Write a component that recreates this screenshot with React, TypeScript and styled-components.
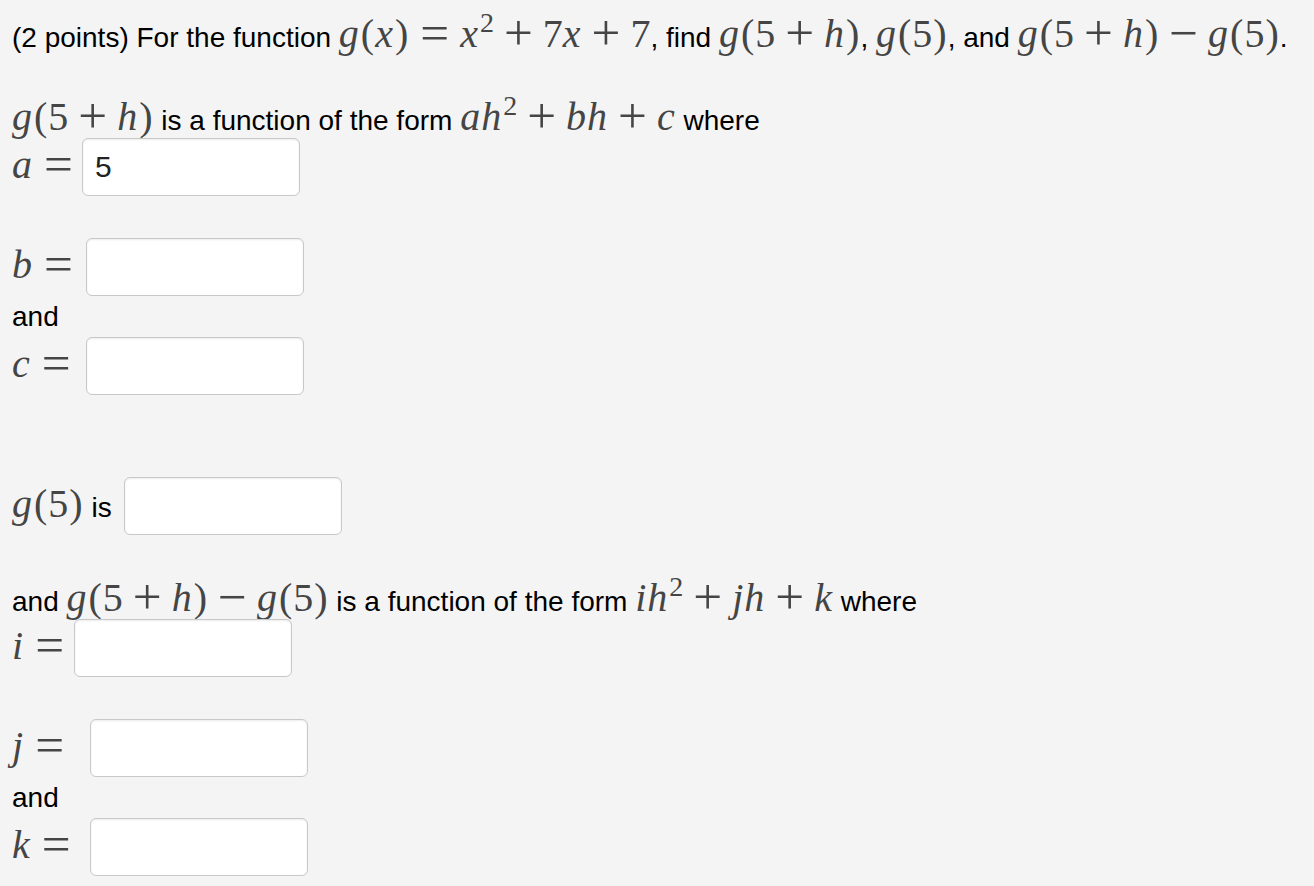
import React from "react";
import styled, { createGlobalStyle } from "styled-components";

const GlobalStyle = createGlobalStyle`
  html, body {
    margin: 0;
    background: #f4f4f4;
  }
`;

const Page = styled.div`
  padding: 14px 12px 8px 12px;
  font-family: "Liberation Sans", Arial, sans-serif;
  font-size: 28px;
  color: #000;
`;

const TextLine = styled.div`
  height: 41px;
  line-height: 41px;
  white-space: nowrap;
`;

const Blank = styled.div<{ h?: number }>`
  height: ${(p) => p.h ?? 41}px;
`;

const Row = styled.div`
  display: flex;
  align-items: center;
  height: 58px;
  white-space: nowrap;
`;

// fixed width of the label before an answer box, so the boxes line up as in the page
const Label = styled.span<{ w: number }>`
  display: inline-block;
  width: ${(p) => p.w}px;
  flex: none;
  line-height: 41px;
`;

const Math = styled.span`
  font-family: "Liberation Serif", "Times New Roman", serif;
  font-size: 40px;
  line-height: 1;
  color: #454545;
  white-space: nowrap;
`;

const V = styled.i`
  font-style: italic;
  padding-right: 1px;
`;

const P = styled.span`
  padding: 0 1px;
`;

const Op = styled.span<{ rel?: boolean }>`
  font-size: 1.28em;
  line-height: 0;
  vertical-align: -0.06em;
  padding: 0 ${(p) => (p.rel ? 11 : 10)}px;
`;

const Sup = styled.sup`
  font-size: 28px;
  vertical-align: 15px;
  line-height: 0;
  padding-left: 1px;
`;

const Answer = styled.input`
  box-sizing: border-box;
  width: 218px;
  height: 58px;
  padding: 0 12px;
  background: #fff;
  border: 1px solid #c8c8c8;
  border-radius: 6px;
  box-shadow: inset 0 1px 2px rgba(0, 0, 0, 0.08);
  font-family: "Liberation Sans", Arial, sans-serif;
  font-size: 30px;
  color: #222;
  outline: none;
`;

const G = ({ arg }: { arg: React.ReactNode }) => (
  <>
    <V>g</V>
    <P>(</P>
    {arg}
    <P>)</P>
  </>
);

const FivePlusH = () => (
  <>
    5<Op>+</Op>
    <V>h</V>
  </>
);

const Diff = () => (
  <Math>
    <G arg={<FivePlusH />} />
    <Op>−</Op>
    <G arg="5" />
  </Math>
);

const Eq = ({ name }: { name: string }) => (
  <Math>
    <V>{name}</V>
    <Op rel>=</Op>
  </Math>
);

export default function App() {
  return (
    <>
      <GlobalStyle />
      <Page>
        <TextLine>
          (2 points) For the function{" "}
          <Math>
            <G arg={<V>x</V>} />
            <Op rel>=</Op>
            <V>x</V>
            <Sup>2</Sup>
            <Op>+</Op>7<V>x</V>
            <Op>+</Op>7
          </Math>
          , find{" "}
          <Math>
            <G arg={<FivePlusH />} />
          </Math>
          ,{" "}
          <Math>
            <G arg="5" />
          </Math>
          , and <Diff />.
        </TextLine>
        <Blank h={42} />
        <TextLine>
          <Math>
            <G arg={<FivePlusH />} />
          </Math>{" "}
          is a function of the form{" "}
          <Math>
            <V>a</V>
            <V>h</V>
            <Sup>2</Sup>
            <Op>+</Op>
            <V>b</V>
            <V>h</V>
            <Op>+</Op>
            <V>c</V>
          </Math>{" "}
          where
        </TextLine>
        <Row>
          <Label w={70}>
            <Eq name="a" />
          </Label>
          <Answer defaultValue="5" />
        </Row>
        <Blank h={42} />
        <Row>
          <Label w={74}>
            <Eq name="b" />
          </Label>
          <Answer />
        </Row>
        <TextLine>and</TextLine>
        <Row>
          <Label w={74}>
            <Eq name="c" />
          </Label>
          <Answer />
        </Row>
        <Blank h={82} />
        <Row>
          <Label w={112}>
            <Math>
              <G arg="5" />
            </Math>{" "}
            is
          </Label>
          <Answer />
        </Row>
        <Blank h={43} />
        <TextLine>
          and <Diff /> is a function of the form{" "}
          <Math>
            <V>i</V>
            <V>h</V>
            <Sup>2</Sup>
            <Op>+</Op>
            <V>j</V>
            <V>h</V>
            <Op>+</Op>
            <V>k</V>
          </Math>{" "}
          where
        </TextLine>
        <Row>
          <Label w={62}>
            <Eq name="i" />
          </Label>
          <Answer />
        </Row>
        <Blank h={42} />
        <Row>
          <Label w={78}>
            <Eq name="j" />
          </Label>
          <Answer />
        </Row>
        <TextLine>and</TextLine>
        <Row>
          <Label w={78}>
            <Eq name="k" />
          </Label>
          <Answer />
        </Row>
      </Page>
    </>
  );
}
